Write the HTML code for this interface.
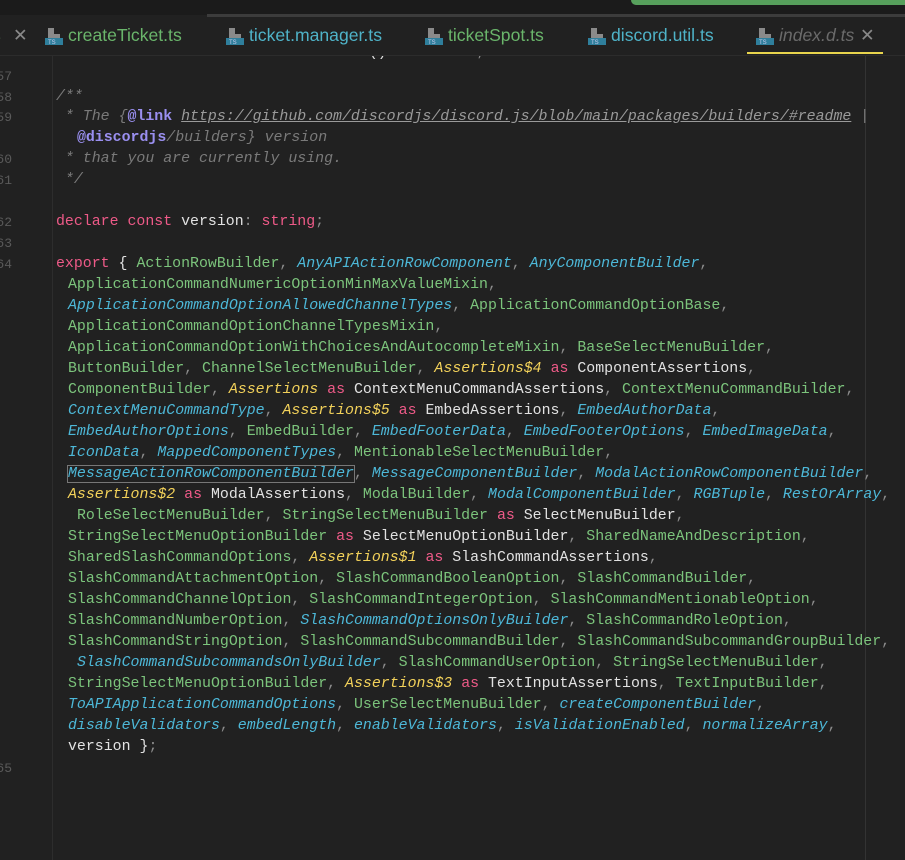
<!DOCTYPE html>
<html><head><meta charset="utf-8"><style>
body{margin:0;width:905px;height:860px;background:#212121;overflow:hidden;position:relative;font-family:"Liberation Mono",monospace;}
.top{position:absolute;left:0;top:0;width:905px;height:15px;background:#1b1b1b;z-index:3}
.sb{position:absolute;left:207px;top:14px;width:698px;height:3px;background:#3c3c3c;z-index:4}
.gb{position:absolute;left:631px;top:0;width:274px;height:5px;background:#57a05c;border-radius:0 0 0 5px;z-index:4}
.tabs{position:absolute;left:0;top:17px;width:905px;height:38px;background:#212121;border-bottom:1px solid #2c2c2c;z-index:3}
.tab{position:absolute;top:8px;font-family:"Liberation Sans",sans-serif;font-size:17.6px;line-height:20px}
.ic{position:absolute;top:10px;width:18px;height:18px}
.gut{position:absolute;left:52px;top:56px;width:1px;height:804px;background:#2d2d2d}
.rl{position:absolute;left:865px;top:56px;width:1px;height:804px;background:#333}
.l{position:absolute;white-space:pre;font-size:14.9px;line-height:21px;color:#e2e2e2}
.n{position:absolute;left:-10px;width:22px;text-align:right;font-size:13px;line-height:21px;color:#5a5a5a}
.g{color:#7cc47c}.c{color:#4db8d8;font-style:italic}.y{color:#f2d15a;font-style:italic}.p{color:#ee5a88}.m{color:#8c8c8c}.w{color:#e2e2e2}
.cm{color:#7a7a7a;font-style:italic}.tg{color:#9a8ff0;font-weight:bold;font-style:normal}.u{text-decoration:underline;color:#9a9a9a}
</style></head><body>
<div class="top"></div><div class="gb"></div><div class="sb"></div>
<div class="tabs">
<div class="tab" style="left:-8px;color:#6fb36f">s</div>
<div class="tab" style="left:13px;color:#888">✕</div>
<svg class="ic" style="left:45px" viewBox="0 0 18 18"><path d="M3 1h6v6h6v4H3z" fill="#8a8a8a"/><rect x="0" y="11" width="18" height="7" fill="#2f7f9c"/><text x="3" y="17" font-size="6" fill="#cce" font-family="Liberation Sans">TS</text></svg>
<div class="tab" style="left:68px;color:#6ab56b">createTicket.ts</div>
<svg class="ic" style="left:226px" viewBox="0 0 18 18"><path d="M3 1h6v6h6v4H3z" fill="#8a8a8a"/><rect x="0" y="11" width="18" height="7" fill="#2f7f9c"/><text x="3" y="17" font-size="6" fill="#cce" font-family="Liberation Sans">TS</text></svg>
<div class="tab" style="left:249px;color:#4fb3c8">ticket.manager.ts</div>
<svg class="ic" style="left:425px" viewBox="0 0 18 18"><path d="M3 1h6v6h6v4H3z" fill="#8a8a8a"/><rect x="0" y="11" width="18" height="7" fill="#2f7f9c"/><text x="3" y="17" font-size="6" fill="#cce" font-family="Liberation Sans">TS</text></svg>
<div class="tab" style="left:448px;color:#6ab56b">ticketSpot.ts</div>
<svg class="ic" style="left:588px" viewBox="0 0 18 18"><path d="M3 1h6v6h6v4H3z" fill="#8a8a8a"/><rect x="0" y="11" width="18" height="7" fill="#2f7f9c"/><text x="3" y="17" font-size="6" fill="#cce" font-family="Liberation Sans">TS</text></svg>
<div class="tab" style="left:611px;color:#4fb3c8">discord.util.ts</div>
<svg class="ic" style="left:756px" viewBox="0 0 18 18"><path d="M3 1h6v6h6v4H3z" fill="#8a8a8a"/><rect x="0" y="11" width="18" height="7" fill="#2f7f9c"/><text x="3" y="17" font-size="6" fill="#cce" font-family="Liberation Sans">TS</text></svg>
<div class="tab" style="left:779px;color:#6a6a6a;font-style:italic">index.d.ts</div>
<div class="tab" style="left:860px;color:#888">✕</div>
<div style="position:absolute;left:747px;top:35px;width:136px;height:2px;background:#e8d44d"></div>
</div>
<div class="gut"></div><div class="rl"></div>

<div class="n" style="top:66px">57</div>
<div class="n" style="top:87px">58</div>
<div class="n" style="top:107px">59</div>
<div class="n" style="top:149px">60</div>
<div class="n" style="top:170px">61</div>
<div class="n" style="top:212px">62</div>
<div class="n" style="top:233px">63</div>
<div class="n" style="top:254px">64</div>
<div class="n" style="top:758px">65</div>

<div class="l" style="left:56px;top:43px"><span class="p">declare const</span> <span class="c" style="font-style:normal">isValidationEnabled</span><span class="m">:</span> () <span class="p">⇒ boolean</span><span class="m">;</span></div>
<div class="l" style="left:56px;top:87px"><span class="cm">/**</span></div>
<div class="l" style="left:56px;top:107px"><span class="cm"> * The {<span class="tg">@link</span> <span class="u">https://github.com/discordjs/discord.js/blob/main/packages/builders/#readme</span> |</span></div>
<div class="l" style="left:68px;top:128px"><span class="cm"> <span class="tg">@discordjs</span>/builders} version</span></div>
<div class="l" style="left:56px;top:149px"><span class="cm"> * that you are currently using.</span></div>
<div class="l" style="left:56px;top:170px"><span class="cm"> */</span></div>
<div class="l" style="left:56px;top:212px"><span class="p">declare const</span> version<span class="m">:</span> <span class="p">string</span><span class="m">;</span></div>
<div class="l" style="left:56px;top:254px"><span class="p">export</span> { <span class="g">ActionRowBuilder</span><span class="m">,</span> <span class="c">AnyAPIActionRowComponent</span><span class="m">,</span> <span class="c">AnyComponentBuilder</span><span class="m">,</span></div>
<div class="l" style="left:68px;top:275px"><span class="g">ApplicationCommandNumericOptionMinMaxValueMixin</span><span class="m">,</span></div>
<div class="l" style="left:68px;top:296px"><span class="c">ApplicationCommandOptionAllowedChannelTypes</span><span class="m">,</span> <span class="g">ApplicationCommandOptionBase</span><span class="m">,</span></div>
<div class="l" style="left:68px;top:317px"><span class="g">ApplicationCommandOptionChannelTypesMixin</span><span class="m">,</span></div>
<div class="l" style="left:68px;top:338px"><span class="g">ApplicationCommandOptionWithChoicesAndAutocompleteMixin</span><span class="m">,</span> <span class="g">BaseSelectMenuBuilder</span><span class="m">,</span></div>
<div class="l" style="left:68px;top:359px"><span class="g">ButtonBuilder</span><span class="m">,</span> <span class="g">ChannelSelectMenuBuilder</span><span class="m">,</span> <span class="y">Assertions$4</span> <span class="p">as</span> ComponentAssertions<span class="m">,</span></div>
<div class="l" style="left:68px;top:380px"><span class="g">ComponentBuilder</span><span class="m">,</span> <span class="y">Assertions</span> <span class="p">as</span> ContextMenuCommandAssertions<span class="m">,</span> <span class="g">ContextMenuCommandBuilder</span><span class="m">,</span></div>
<div class="l" style="left:68px;top:401px"><span class="c">ContextMenuCommandType</span><span class="m">,</span> <span class="y">Assertions$5</span> <span class="p">as</span> EmbedAssertions<span class="m">,</span> <span class="c">EmbedAuthorData</span><span class="m">,</span></div>
<div class="l" style="left:68px;top:422px"><span class="c">EmbedAuthorOptions</span><span class="m">,</span> <span class="g">EmbedBuilder</span><span class="m">,</span> <span class="c">EmbedFooterData</span><span class="m">,</span> <span class="c">EmbedFooterOptions</span><span class="m">,</span> <span class="c">EmbedImageData</span><span class="m">,</span></div>
<div class="l" style="left:68px;top:443px"><span class="c">IconData</span><span class="m">,</span> <span class="c">MappedComponentTypes</span><span class="m">,</span> <span class="g">MentionableSelectMenuBuilder</span><span class="m">,</span></div>
<div class="l" style="left:68px;top:464px"><span class="c" style="outline:1px solid #777;outline-offset:0">MessageActionRowComponentBuilder</span><span class="m">,</span> <span class="c">MessageComponentBuilder</span><span class="m">,</span> <span class="c">ModalActionRowComponentBuilder</span><span class="m">,</span></div>
<div class="l" style="left:68px;top:485px"><span class="y">Assertions$2</span> <span class="p">as</span> ModalAssertions<span class="m">,</span> <span class="g">ModalBuilder</span><span class="m">,</span> <span class="c">ModalComponentBuilder</span><span class="m">,</span> <span class="c">RGBTuple</span><span class="m">,</span> <span class="c">RestOrArray</span><span class="m">,</span></div>
<div class="l" style="left:68px;top:506px"> <span class="g">RoleSelectMenuBuilder</span><span class="m">,</span> <span class="g">StringSelectMenuBuilder</span> <span class="p">as</span> SelectMenuBuilder<span class="m">,</span></div>
<div class="l" style="left:68px;top:527px"><span class="g">StringSelectMenuOptionBuilder</span> <span class="p">as</span> SelectMenuOptionBuilder<span class="m">,</span> <span class="g">SharedNameAndDescription</span><span class="m">,</span></div>
<div class="l" style="left:68px;top:548px"><span class="g">SharedSlashCommandOptions</span><span class="m">,</span> <span class="y">Assertions$1</span> <span class="p">as</span> SlashCommandAssertions<span class="m">,</span></div>
<div class="l" style="left:68px;top:569px"><span class="g">SlashCommandAttachmentOption</span><span class="m">,</span> <span class="g">SlashCommandBooleanOption</span><span class="m">,</span> <span class="g">SlashCommandBuilder</span><span class="m">,</span></div>
<div class="l" style="left:68px;top:590px"><span class="g">SlashCommandChannelOption</span><span class="m">,</span> <span class="g">SlashCommandIntegerOption</span><span class="m">,</span> <span class="g">SlashCommandMentionableOption</span><span class="m">,</span></div>
<div class="l" style="left:68px;top:611px"><span class="g">SlashCommandNumberOption</span><span class="m">,</span> <span class="c">SlashCommandOptionsOnlyBuilder</span><span class="m">,</span> <span class="g">SlashCommandRoleOption</span><span class="m">,</span></div>
<div class="l" style="left:68px;top:632px"><span class="g">SlashCommandStringOption</span><span class="m">,</span> <span class="g">SlashCommandSubcommandBuilder</span><span class="m">,</span> <span class="g">SlashCommandSubcommandGroupBuilder</span><span class="m">,</span></div>
<div class="l" style="left:68px;top:653px"> <span class="c">SlashCommandSubcommandsOnlyBuilder</span><span class="m">,</span> <span class="g">SlashCommandUserOption</span><span class="m">,</span> <span class="g">StringSelectMenuBuilder</span><span class="m">,</span></div>
<div class="l" style="left:68px;top:674px"><span class="g">StringSelectMenuOptionBuilder</span><span class="m">,</span> <span class="y">Assertions$3</span> <span class="p">as</span> TextInputAssertions<span class="m">,</span> <span class="g">TextInputBuilder</span><span class="m">,</span></div>
<div class="l" style="left:68px;top:695px"><span class="c">ToAPIApplicationCommandOptions</span><span class="m">,</span> <span class="g">UserSelectMenuBuilder</span><span class="m">,</span> <span class="c">createComponentBuilder</span><span class="m">,</span></div>
<div class="l" style="left:68px;top:716px"><span class="c">disableValidators</span><span class="m">,</span> <span class="c">embedLength</span><span class="m">,</span> <span class="c">enableValidators</span><span class="m">,</span> <span class="c">isValidationEnabled</span><span class="m">,</span> <span class="c">normalizeArray</span><span class="m">,</span></div>
<div class="l" style="left:68px;top:737px">version }<span class="m">;</span></div>
</body></html>
